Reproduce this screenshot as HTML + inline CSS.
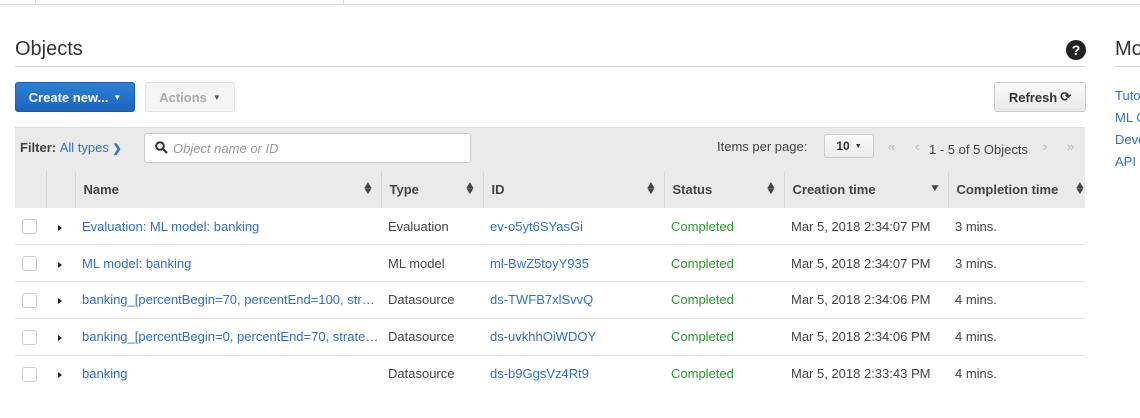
<!DOCTYPE html>
<html><head><style>
*{box-sizing:border-box;margin:0;padding:0}
body{width:1140px;height:418px;overflow:hidden;background:#fff;font-family:"Liberation Sans",sans-serif;color:#444;position:relative;font-size:13px}
.a{position:absolute}
a,.lk{color:#2f72c4}
.btn{position:absolute;height:30px;border-radius:3px;font-weight:bold;font-size:13px;display:flex;align-items:center;justify-content:center}
table{position:absolute;left:15px;top:171px;width:1070px;border-collapse:collapse;table-layout:fixed}
th{background:#eaeaea;height:37px;text-align:left;font-size:13px;color:#444;border-left:1px solid #d8d8d8;padding-left:8px;position:relative}
th .s{position:absolute;right:8px;top:12px;font-size:10px;line-height:6px;color:#444;transform:scaleX(1.2)}
td{height:36.8px;border-bottom:1px solid #e3e3e3;padding-left:7px;white-space:nowrap;overflow:hidden;text-overflow:ellipsis;font-size:13px}
tr:last-child td{border-bottom:none}
.cb{display:inline-block;width:15px;height:15px;border:1px solid #ccc;border-radius:3px;vertical-align:middle}
.tri{display:inline-block;width:0;height:0;border-left:4px solid #222;border-top:3.5px solid transparent;border-bottom:3.5px solid transparent}
.g{color:#2a9b2a}
</style></head><body>
<div class="a" style="left:0;top:0;width:1140px;height:5px;border-bottom:1px solid #e2e2e2;background:#fbfbfb"></div>
<div class="a" style="left:35px;top:0;width:1px;height:5px;background:#ddd"></div>
<div class="a" style="left:343px;top:0;width:1px;height:5px;background:#ddd"></div>
<div class="a" style="left:15px;top:38px;font-size:20px;color:#333">Objects</div>
<svg class="a" style="left:1066px;top:40px" width="20" height="20" viewBox="0 0 20 20"><circle cx="10" cy="10" r="10" fill="#222"/><text x="10" y="15" text-anchor="middle" font-family="Liberation Sans" font-weight="bold" font-size="14" fill="#fff">?</text></svg>
<div class="a" style="left:15px;top:66px;width:1070px;height:1px;background:#ddd"></div>
<div class="a" style="left:1115px;top:38px;font-size:20px;color:#333">Mo</div>
<div class="a" style="left:1115px;top:66px;width:25px;height:1px;background:#ddd"></div>
<div class="a lk" style="left:1115px;top:85px;line-height:22px;font-size:13px;white-space:nowrap;width:25px;overflow:hidden">Tutorials<br>ML Concepts<br>Developer<br>API</div>
<div class="btn" style="left:15px;top:82px;width:120px;background:linear-gradient(#2d7fd6,#1a66bf);color:#fff;border:1px solid #1a5eb0">Create new... <span style="font-size:8px;margin-left:5px">▼</span></div>
<div class="btn" style="left:145px;top:82px;width:90px;background:#f5f5f5;color:#aaa;border:1px solid #e4e4e4;font-weight:bold">Actions <span style="font-size:8px;margin-left:6px;color:#555">▼</span></div>
<div class="btn" style="left:994px;top:82px;width:92px;background:linear-gradient(#fafafa,#e9e9e9);color:#333;border:1px solid #ccc">Refresh <span style="margin-left:3px;font-size:13px">⟳</span></div>
<div class="a" style="left:15px;top:127px;width:1070px;height:44px;background:#eaeaea;border-top:1px solid #ddd"></div>
<div class="a" style="left:20px;top:140px;font-weight:bold;color:#444">Filter: <span class="lk" style="font-weight:normal">All types</span> <span class="lk" style="font-size:11px">❯</span></div>
<div class="a" style="left:144px;top:133px;width:327px;height:30px;background:#fff;border:1px solid #ccc;border-radius:3px"></div>
<svg class="a" style="left:155px;top:141px" width="13" height="13" viewBox="0 0 13 13"><circle cx="5" cy="5" r="3.8" fill="none" stroke="#333" stroke-width="2"/><path d="M8 8l4 4" stroke="#333" stroke-width="2.2"/></svg>
<div class="a" style="left:173px;top:141px;color:#999;font-style:italic">Object name or ID</div>
<div class="a" style="left:717px;top:139px;color:#444">Items per page:</div>
<div class="btn" style="left:824px;top:134px;width:50px;height:24px;background:linear-gradient(#fafafa,#ececec);border:1px solid #ccc;color:#333;font-size:12px">10 <span style="font-size:7px;margin-left:5px">▼</span></div>
<div class="a" style="left:888px;top:139px;color:#bbb">«</div>
<div class="a" style="left:915px;top:139px;color:#bbb">‹</div>
<div class="a" style="left:929px;top:142px;color:#444">1 - 5 of 5 Objects</div>
<div class="a" style="left:1043px;top:139px;color:#bbb">›</div>
<div class="a" style="left:1067px;top:139px;color:#bbb">»</div>
<table>
<colgroup><col style="width:31px"><col style="width:29px"><col style="width:306px"><col style="width:102px"><col style="width:181px"><col style="width:120px"><col style="width:164px"><col style="width:137px"></colgroup>
<tr><th style="border-left:none"></th><th></th><th>Name<span class="s">▲<br>▼</span></th><th>Type<span class="s">▲<br>▼</span></th><th>ID<span class="s">▲<br>▼</span></th><th>Status<span class="s">▲<br>▼</span></th><th>Creation time<span class="s" style="top:15px">▼</span></th><th>Completion time<span class="s" style="right:0px">▲<br>▼</span></th></tr>
<tr><td><span class="cb"></span></td><td style="padding-left:12px"><span class="tri"></span></td><td class="lk">Evaluation: ML model: banking</td><td>Evaluation</td><td class="lk">ev-o5yt6SYasGi</td><td class="g">Completed</td><td>Mar 5, 2018 2:34:07 PM</td><td>3 mins.</td></tr>
<tr><td><span class="cb"></span></td><td style="padding-left:12px"><span class="tri"></span></td><td class="lk">ML model: banking</td><td>ML model</td><td class="lk">ml-BwZ5toyY935</td><td class="g">Completed</td><td>Mar 5, 2018 2:34:07 PM</td><td>3 mins.</td></tr>
<tr><td><span class="cb"></span></td><td style="padding-left:12px"><span class="tri"></span></td><td class="lk">banking_[percentBegin=70, percentEnd=100, strategy=sequential]</td><td>Datasource</td><td class="lk">ds-TWFB7xlSvvQ</td><td class="g">Completed</td><td>Mar 5, 2018 2:34:06 PM</td><td>4 mins.</td></tr>
<tr><td><span class="cb"></span></td><td style="padding-left:12px"><span class="tri"></span></td><td class="lk">banking_[percentBegin=0, percentEnd=70, strategy=sequential]</td><td>Datasource</td><td class="lk">ds-uvkhhOiWDOY</td><td class="g">Completed</td><td>Mar 5, 2018 2:34:06 PM</td><td>4 mins.</td></tr>
<tr><td><span class="cb"></span></td><td style="padding-left:12px"><span class="tri"></span></td><td class="lk">banking</td><td>Datasource</td><td class="lk">ds-b9GgsVz4Rt9</td><td class="g">Completed</td><td>Mar 5, 2018 2:33:43 PM</td><td>4 mins.</td></tr>
</table>
</body></html>
